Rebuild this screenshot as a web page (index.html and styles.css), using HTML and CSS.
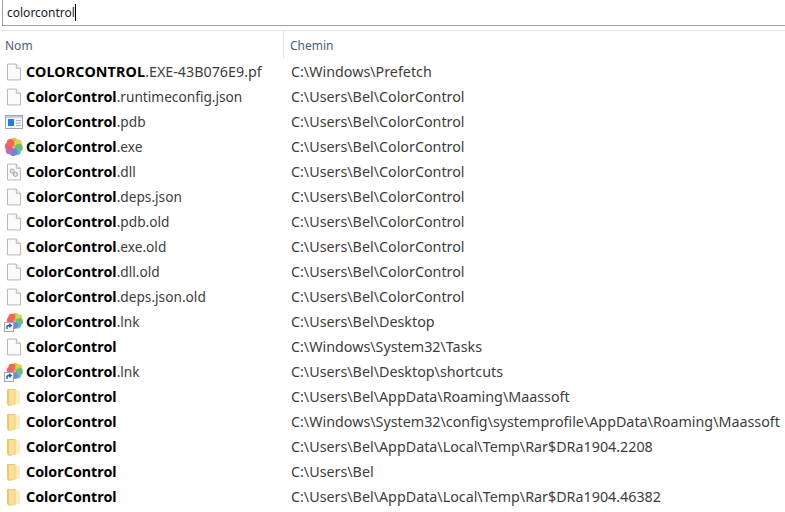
FILE: index.html
```html
<!DOCTYPE html>
<html lang="fr">
<head>
<meta charset="utf-8">
<title>Recherche</title>
<link rel="stylesheet" href="styles.css">
</head>
<body>
<svg class="defs" width="0" height="0" aria-hidden="true">
  <defs>
    <symbol id="file" viewBox="0 0 15 18">
      <path d="M.5 .5H10L14.500 5V17.500H.5Z" fill="#fbfbfb" stroke="#b2b2b2"/>
      <path d="M10 .5V5H14.500" fill="#f2f2f2" stroke="#b2b2b2"/>
    </symbol>
    <symbol id="dll" viewBox="0 0 15 18">
      <path d="M.5 .5H10L14.500 5V17.500H.5Z" fill="#fbfbfb" stroke="#b2b2b2"/>
      <path d="M10 .5V5H14.500" fill="#f2f2f2" stroke="#b2b2b2"/>
      <circle cx="5.500" cy="8" r="2.300" fill="#dfe5ea" stroke="#98a2ac"/>
      <circle cx="9" cy="11.500" r="2.300" fill="#dfe5ea" stroke="#98a2ac"/>
    </symbol>
    <symbol id="pdb" viewBox="0 0 18 14">
      <rect x=".5" y=".5" width="17" height="13" fill="#f5f7fb" stroke="#9aa5b6"/>
      <rect x="1" y="1" width="16" height="2" fill="#c3cfe0"/>
      <rect x="3" y="4" width="6" height="7" fill="#1e80e6"/>
      <path d="M11 5.500H16M11 8H16M11 10.500H16" stroke="#aab4c3"/>
    </symbol>
    <symbol id="flower" viewBox="0 0 20 20">
      <g opacity=".85">
        <circle cx="10" cy="5.300" r="4.200" fill="#f7a21e"/>
        <circle cx="14.200" cy="6.400" r="3.800" fill="#cdd02c"/>
        <circle cx="15" cy="10.600" r="3.900" fill="#58b54f"/>
        <circle cx="13" cy="14.500" r="3.800" fill="#39b3bd"/>
        <circle cx="9.300" cy="15" r="3.900" fill="#5d70cb"/>
        <circle cx="5.500" cy="13.400" r="3.800" fill="#9460bd"/>
        <circle cx="4.800" cy="9.300" r="3.900" fill="#e0446f"/>
        <circle cx="6.500" cy="5.700" r="3.800" fill="#ee4f36"/>
      </g>
      <circle cx="10" cy="10" r="2.200" fill="#c98f8c" opacity=".7"/>
    </symbol>
    <symbol id="link" viewBox="0 0 20 20">
      <use href="#flower" x="2" y="0" width="18" height="18"/>
      <rect x=".5" y="10.500" width="9" height="9" fill="#f4f4f4" stroke="#a8a8a8"/>
      <path d="M3 17V15Q3 13.500 5 13.500H7M5.200 11.700L7.200 13.500L5.200 15.300" fill="none" stroke="#1c62b8" stroke-width="1.400"/>
    </symbol>
    <symbol id="folder" viewBox="0 0 14 18">
      <path d="M0 1H8V16.500L2 18L0 16Z" fill="#e6c878"/>
      <path d="M2 2H8V16.500H2Z" fill="#fae09a"/>
      <path d="M8 1.500L13 3V15.500L8 16.500Z" fill="#fdecb8"/>
      <path d="M8 1.500V16.500" stroke="#f0d07a"/>
    </symbol>
  </defs>
</svg>
<main class="window">
  <div class="search"><span class="query">colorcontrol</span><span class="caret"></span></div>
  <div class="head">
    <div class="col-name">Nom</div>
    <div class="col-path">Chemin</div>
  </div>
  <ul class="rows">
    <li class="row"><span class="ico"><svg class="doc"><use href="#file"/></svg></span><span class="name caps"><b>COLORCONTROL</b>.EXE-43B076E9.pf</span><span class="path">C:\Windows\Prefetch</span></li>
    <li class="row"><span class="ico"><svg class="doc"><use href="#file"/></svg></span><span class="name"><b>ColorControl</b>.runtimeconfig.json</span><span class="path">C:\Users\Bel\ColorControl</span></li>
    <li class="row"><span class="ico"><svg class="pdb"><use href="#pdb"/></svg></span><span class="name"><b>ColorControl</b>.pdb</span><span class="path">C:\Users\Bel\ColorControl</span></li>
    <li class="row"><span class="ico"><svg class="app"><use href="#flower"/></svg></span><span class="name"><b>ColorControl</b>.exe</span><span class="path">C:\Users\Bel\ColorControl</span></li>
    <li class="row"><span class="ico"><svg class="doc"><use href="#dll"/></svg></span><span class="name"><b>ColorControl</b>.dll</span><span class="path">C:\Users\Bel\ColorControl</span></li>
    <li class="row"><span class="ico"><svg class="doc"><use href="#file"/></svg></span><span class="name"><b>ColorControl</b>.deps.json</span><span class="path">C:\Users\Bel\ColorControl</span></li>
    <li class="row"><span class="ico"><svg class="doc"><use href="#file"/></svg></span><span class="name"><b>ColorControl</b>.pdb.old</span><span class="path">C:\Users\Bel\ColorControl</span></li>
    <li class="row"><span class="ico"><svg class="doc"><use href="#file"/></svg></span><span class="name"><b>ColorControl</b>.exe.old</span><span class="path">C:\Users\Bel\ColorControl</span></li>
    <li class="row"><span class="ico"><svg class="doc"><use href="#file"/></svg></span><span class="name"><b>ColorControl</b>.dll.old</span><span class="path">C:\Users\Bel\ColorControl</span></li>
    <li class="row"><span class="ico"><svg class="doc"><use href="#file"/></svg></span><span class="name"><b>ColorControl</b>.deps.json.old</span><span class="path">C:\Users\Bel\ColorControl</span></li>
    <li class="row"><span class="ico"><svg class="app"><use href="#link"/></svg></span><span class="name"><b>ColorControl</b>.lnk</span><span class="path">C:\Users\Bel\Desktop</span></li>
    <li class="row"><span class="ico"><svg class="doc"><use href="#file"/></svg></span><span class="name"><b>ColorControl</b></span><span class="path">C:\Windows\System32\Tasks</span></li>
    <li class="row"><span class="ico"><svg class="app"><use href="#link"/></svg></span><span class="name"><b>ColorControl</b>.lnk</span><span class="path">C:\Users\Bel\Desktop\shortcuts</span></li>
    <li class="row"><span class="ico"><svg class="doc"><use href="#folder"/></svg></span><span class="name"><b>ColorControl</b></span><span class="path">C:\Users\Bel\AppData\Roaming\Maassoft</span></li>
    <li class="row"><span class="ico"><svg class="doc"><use href="#folder"/></svg></span><span class="name"><b>ColorControl</b></span><span class="path">C:\Windows\System32\config\systemprofile\AppData\Roaming\Maassoft</span></li>
    <li class="row"><span class="ico"><svg class="doc"><use href="#folder"/></svg></span><span class="name"><b>ColorControl</b></span><span class="path">C:\Users\Bel\AppData\Local\Temp\Rar$DRa1904.2208</span></li>
    <li class="row"><span class="ico"><svg class="doc"><use href="#folder"/></svg></span><span class="name"><b>ColorControl</b></span><span class="path">C:\Users\Bel</span></li>
    <li class="row"><span class="ico"><svg class="doc"><use href="#folder"/></svg></span><span class="name"><b>ColorControl</b></span><span class="path">C:\Users\Bel\AppData\Local\Temp\Rar$DRa1904.46382</span></li>
  </ul>
</main>
</body>
</html>
```
FILE: styles.css
```css
html, body {
  margin: 0;
  padding: 0;
  background: #fff;
  overflow: hidden;
}
.defs { display: block; height: 0; }
.window {
  width: 785px;
  height: 512px;
  overflow: hidden;
  font-family: "Noto Sans", "Open Sans", sans-serif;
  font-size: 14.3px;
  color: #3d3d3d;
}
.search {
  box-sizing: border-box;
  height: 26px;
  margin-left: 2px;
  padding-left: 4px;
  border-left: 1px solid #a0a0a0;
  border-bottom: 1px solid #a0a0a0;
  display: flex;
  align-items: center;
  color: #222;
  font-size: 12px;
}
.caret {
  width: 1px;
  height: 17px;
  background: #000;
}
.head {
  box-sizing: border-box;
  margin-top: 4px;
  height: 29px;
  border-top: 1px solid #e5e5e5;
  display: flex;
  font-size: 12px;
  color: #4c607a;
}
.col-name {
  box-sizing: border-box;
  width: 284px;
  padding: 6px 0 0 5px;
  border-right: 1px solid #e5e5e5;
}
.col-path {
  padding: 6px 0 0 6px;
}
.rows {
  list-style: none;
  margin: 0;
  padding: 0;
}
.row {
  height: 25px;
  display: flex;
  align-items: center;
  white-space: nowrap;
}
.ico {
  flex: none;
  width: 26px;
  height: 25px;
  display: flex;
  align-items: center;
}
.ico svg { display: block; }
.doc { width: 14px; height: 18px; margin-left: 7px; }
.pdb { width: 18px; height: 14px; margin-left: 5px; }
.app { width: 20px; height: 20px; margin-left: 4px; }
.name {
  width: 265px;
  flex: none;
  font-size: 13.7px;
}
.name b {
  color: #000;
  font-size: 14.3px;
  font-weight: 700;
}
.caps { font-size: 14.3px; }
.caps b { letter-spacing: .15px; }
```
